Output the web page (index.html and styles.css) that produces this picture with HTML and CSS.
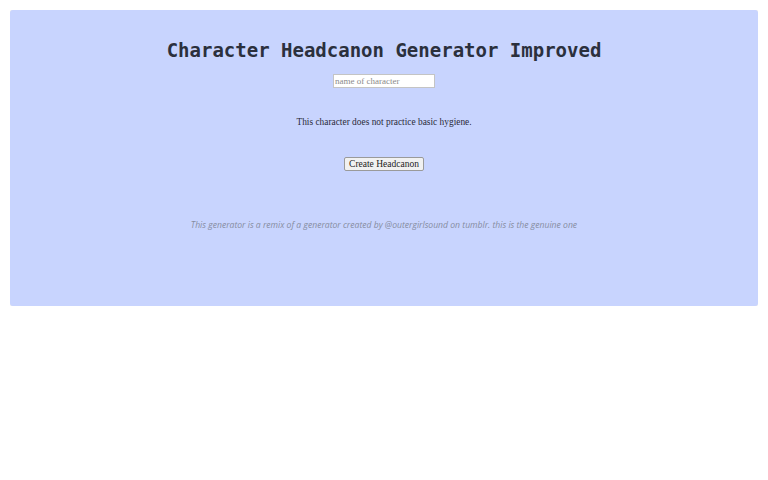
FILE: index.html
```html
<!DOCTYPE html>
<html lang="en">

<head>
    <meta charset="UTF-8">
    <meta name="viewport" content="width=device-width, initial-scale=1.0">
    <title>Character Headcanon Generator Improved</title>
    <link rel="stylesheet" href="styles.css">
</head>

<body>
    <div class="generator">
        <h1>Character Headcanon Generator Improved</h1>
        <input type="text" id="charname" class="namebox" placeholder="name of character">
        <p class="result" id="result">This character does not practice basic hygiene.</p>
        <button class="makebtn" onclick="makeHeadcanon()">Create Headcanon</button>
        <p class="credit">This generator is a remix of a generator created by @outergirlsound on tumblr. this is the genuine one</p>
    </div>
    <script>
        let canons = [
            "does not practice basic hygiene.",
            "sleeps with a nightlight on.",
            "can't whistle no matter how hard they try.",
            "secretly loves bad reality TV.",
            "talks to plants when nobody is around."
        ];
        function makeHeadcanon() {
            let name = document.getElementById("charname").value;
            if (name == "" || name == null) {
                name = "This character";
            }
            let pick = canons[Math.floor(Math.random() * canons.length)];
            document.getElementById("result").innerText = name + " " + pick;
        }
    </script>
</body>

</html>
```

FILE: styles.css
```css
body {
    margin: 10px;
    font-family: "Liberation Serif", serif;
    background-color: #ffffff;
}

.generator {
    background-color: #c8d4fe;
    border-radius: 3px;
    box-shadow: 0 0 2px rgba(0, 0, 0, 0.15);
    height: 296px;
    box-sizing: border-box;
    padding-top: 29px;
    text-align: center;
}

h1 {
    margin: 0 0 13px 0;
    font-family: "DejaVu Sans Mono", monospace;
    font-size: 19px;
    color: #2b303d;
}

.namebox {
    width: 102px;
    height: 14px;
    box-sizing: border-box;
    padding: 0 1px;
    border: 1px solid #c4c4c4;
    font-family: "Liberation Serif", serif;
    font-size: 9px;
    display: block;
    margin: 0 auto;
}

.namebox::placeholder {
    color: #8a8a8a;
}

.result {
    margin: 29px 0 0 0;
    font-size: 9.4px;
    color: #2b2b3a;
}

.makebtn {
    margin-top: 30px;
    font-family: "Liberation Serif", serif;
    font-size: 9.5px;
    color: #222;
    background-color: #f1f1f1;
    border: 1px solid #9a9a9a;
    border-radius: 2px;
    padding: 1px 4px;
}

.credit {
    margin: 48px 0 0 0;
    font-family: "Open Sans", sans-serif;
    font-style: italic;
    font-size: 8.6px;
    color: #868c9e;
}
```
